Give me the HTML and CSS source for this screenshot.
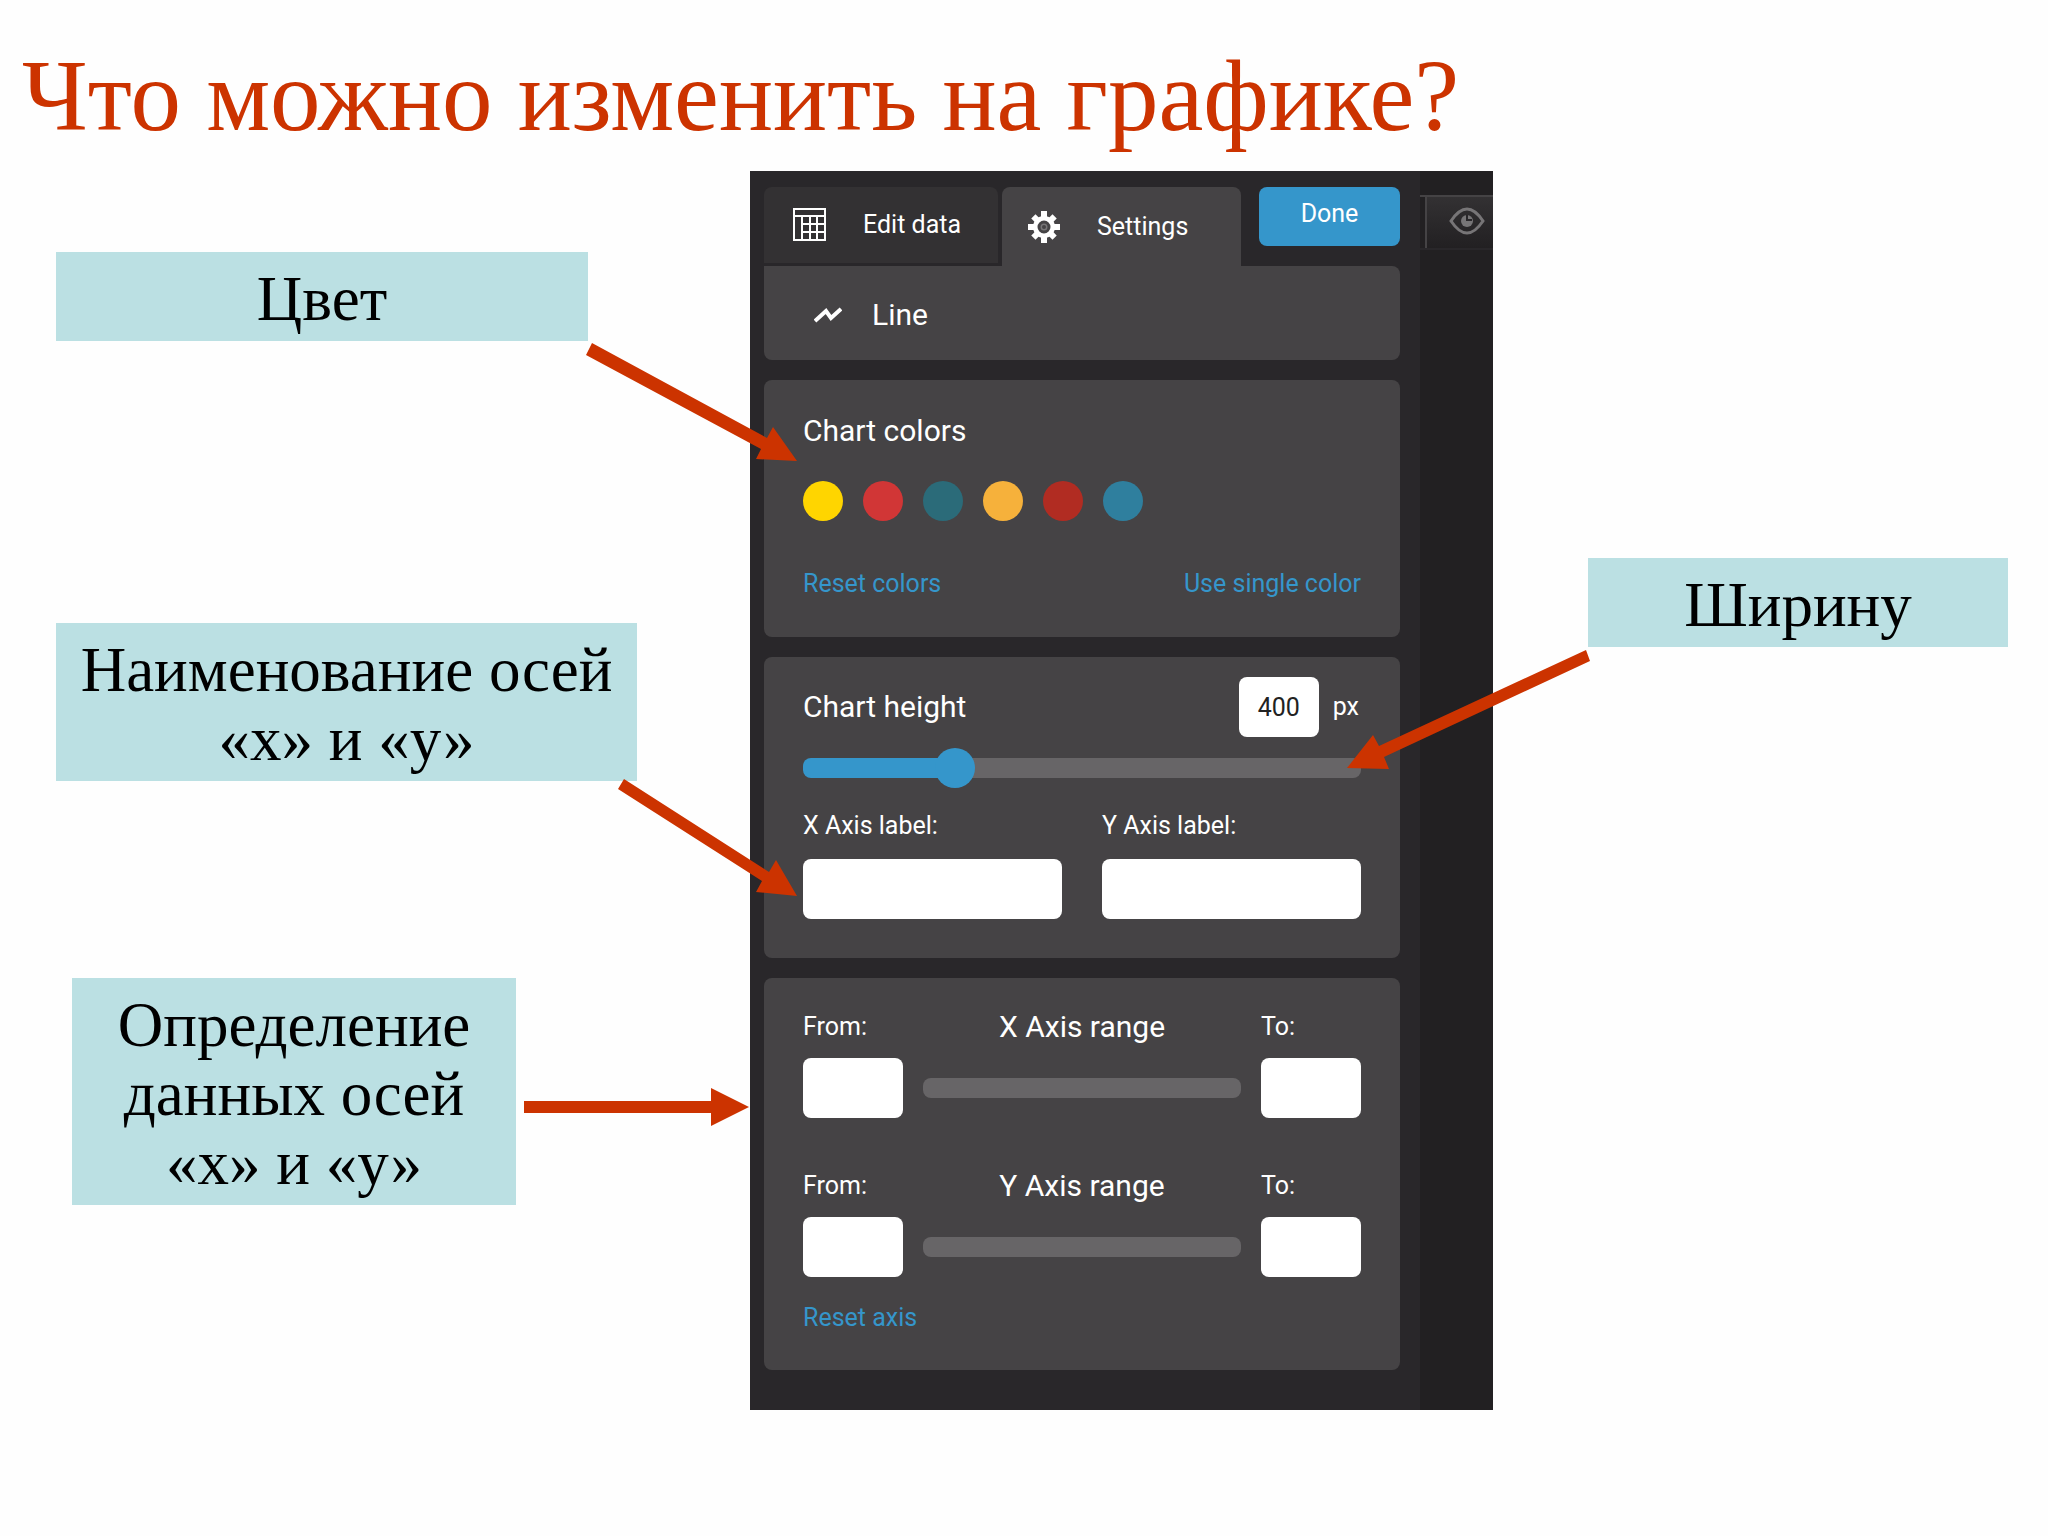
FILE: index.html
```html
<!DOCTYPE html>
<html lang="ru">

<head>
    <meta charset="UTF-8">
    <title>Что можно изменить на графике?</title>
    <link rel="stylesheet" href="styles.css">
</head>

<body>
    <h1 class="title">Что можно изменить на графике?</h1>
    <main class="slide">
        <div class="notes notes-left">
            <div class="note note-color">
                Цвет
                <svg class="arrow arrow-color" width="216" height="124" viewBox="0 0 216 124">
                    <path d="M9 0L184 95L190 84L214 118L173 116L178 106L3 12Z" />
                </svg>
            </div>
            <div class="note note-axis">
                Наименование осей «х» и «у»
                <svg class="arrow arrow-axis" width="184" height="122" viewBox="0 0 184 122">
                    <path d="M9 0L154 93L161 81L182 117L141 113L147 102L3 10Z" />
                </svg>
            </div>
            <div class="note note-range">
                Определение данных осей «х» и «у»
                <svg class="arrow arrow-range" width="225" height="38" viewBox="0 0 225 38">
                    <path d="M0 13H187V0L225 19L187 38V25H0Z" />
                </svg>
            </div>
        </div>

        <div class="editor">
            <form class="sidebar">
                <div class="tabs">
                    <button type="button" class="tab">
                        <svg class="tab-icon" width="36" height="36" viewBox="0 0 36 36">
                            <path d="M2 2H33V33H2ZM2 9H33M10 9V33M18 9V33M25 9V33M10 17H33M10 25H33" fill="none" stroke="#fff" stroke-width="2" />
                        </svg>
                        Edit data
                    </button>
                    <button type="button" class="tab active">
                        <svg class="tab-icon" width="36" height="36" viewBox="-18 -18 36 36">
                            <g fill="#fff">
                                <rect x="-3" y="-16" width="6" height="32" />
                                <rect x="-16" y="-3" width="32" height="6" />
                                <rect x="-3" y="-15" width="6" height="30" transform="rotate(45)" />
                                <rect x="-3" y="-15" width="6" height="30" transform="rotate(-45)" />
                                <circle r="11" />
                            </g>
                            <circle r="5" fill="#777577" stroke="#454345" stroke-width="3" />
                            <circle r="2" fill="#454345" />
                        </svg>
                        Settings
                    </button>
                    <button type="button" class="done">Done</button>
                </div>

                <section class="card card-type">
                    <svg width="28" height="16" viewBox="0 0 28 16">
                        <path d="M1 14L12 4L17 11L27 2" fill="none" stroke="#fff" stroke-width="4" />
                    </svg>
                    <h2>Line</h2>
                </section>

                <section class="card card-colors">
                    <h2>Chart colors</h2>
                    <div class="swatches">
                        <button type="button" class="swatch yellow" aria-label="Color 1"></button>
                        <button type="button" class="swatch red" aria-label="Color 2"></button>
                        <button type="button" class="swatch teal" aria-label="Color 3"></button>
                        <button type="button" class="swatch orange" aria-label="Color 4"></button>
                        <button type="button" class="swatch brick" aria-label="Color 5"></button>
                        <button type="button" class="swatch blue" aria-label="Color 6"></button>
                    </div>
                    <div class="links">
                        <a href="#">Reset colors</a>
                        <a href="#">Use single color</a>
                    </div>
                </section>

                <section class="card card-height">
                    <div class="height-row">
                        <h2><label for="height">Chart height</label></h2>
                        <input type="text" id="height" class="box" value="400">
                        <span>px</span>
                    </div>
                    <input type="range" class="slider height-slider" min="0" max="1000" value="255" aria-label="Chart height">
                    <div class="label-row">
                        <div class="field">
                            <label for="x-label">X Axis label:</label>
                            <input type="text" id="x-label" class="box">
                        </div>
                        <div class="field">
                            <label for="y-label">Y Axis label:</label>
                            <input type="text" id="y-label" class="box">
                        </div>
                    </div>
                </section>

                <section class="card card-range">
                    <div class="range">
                        <label for="x-from">From:</label>
                        <h2>X Axis range</h2>
                        <label for="x-to">To:</label>
                        <input type="text" id="x-from" class="box">
                        <input type="range" class="slider" aria-label="X Axis range">
                        <input type="text" id="x-to" class="box">
                    </div>
                    <div class="range">
                        <label for="y-from">From:</label>
                        <h2>Y Axis range</h2>
                        <label for="y-to">To:</label>
                        <input type="text" id="y-from" class="box">
                        <input type="range" class="slider" aria-label="Y Axis range">
                        <input type="text" id="y-to" class="box">
                    </div>
                    <a href="#">Reset axis</a>
                </section>
            </form>
            <div class="canvas">
                <div class="toolbar">
                    <button type="button" class="preview" aria-label="Preview">
                        <svg width="36" height="28" viewBox="0 0 36 28">
                            <path d="M2 14Q10 2 18 2Q26 2 34 14Q26 26 18 26Q10 26 2 14Z" fill="none" stroke="#777577" stroke-width="3" />
                            <circle cx="18" cy="14" r="6" fill="#777577" />
                            <path d="M18 8V13H23" fill="none" stroke="#29272a" stroke-width="2" />
                        </svg>
                    </button>
                </div>
            </div>
        </div>

        <div class="notes notes-right">
            <div class="note note-width">
                Ширину
                <svg class="arrow arrow-width" width="244" height="122" viewBox="0 0 244 122">
                    <path d="M240 2L33 98L27 87L1 120L43 121L38 109L244 13Z" />
                </svg>
            </div>
        </div>
    </main>
</body>

</html>
```
FILE: styles.css
```css
* {
    box-sizing: border-box;
}

body {
    margin: 0;
    background: #fefefe;
    font-family: "Liberation Serif", serif;
    color: #000;
}

h1,
h2 {
    margin: 0;
    font-weight: normal;
}

.title {
    padding: 36px 22px 15px;
    font-size: 101px;
    line-height: 120px;
    color: #cc3300;
}

.slide {
    display: grid;
    grid-template-columns: 750fr 743fr 555fr;
    align-items: start;
}

/* callouts */
.notes-left {
    padding: 81px 0 0 56px;
}

.notes-right {
    padding: 387px 40px 0 95px;
}

.note {
    position: relative;
    padding: 13px 20px 7px;
    background: #bbe0e3;
    font-size: 63px;
    line-height: 69px;
    text-align: center;
}

.note-color {
    width: 532px;
}

.note-axis {
    width: 581px;
    margin-top: 282px;
}

.note-range {
    width: 444px;
    margin: 197px 0 0 16px;
}

.arrow {
    position: absolute;
    z-index: 1;
    fill: #cc3300;
}

.arrow-color {
    left: calc(100% - 5px);
    top: 91px;
}

.arrow-axis {
    left: calc(100% - 22px);
    top: 156px;
}

.arrow-range {
    left: calc(100% + 8px);
    top: 110px;
}

.arrow-width {
    right: calc(100% - 2px);
    top: 90px;
}

/* editor */
.editor {
    display: flex;
    background: #29272a;
    color: #fff;
    font-family: Roboto, sans-serif;
    font-size: 25px;
    line-height: 30px;
}

.sidebar {
    flex: 1;
    padding: 16px 20px 40px 14px;
}

.tabs {
    display: grid;
    grid-template-columns: 234fr 243fr 159fr;
    align-items: start;
}

.tab {
    display: flex;
    align-items: center;
    height: 76px;
    padding: 0 28px;
    border: none;
    border-radius: 8px 8px 0 0;
    background: #333133;
    color: #fff;
    font: inherit;
    white-space: nowrap;
}

.tab-icon {
    margin-right: 35px;
}

.tab.active {
    height: 79px;
    margin-left: 4px;
    padding: 0 24px;
    background: #454345;
}

.done {
    height: 59px;
    margin-left: 18px;
    padding: 0 0 6px;
    border: none;
    border-radius: 8px;
    background: #3596cb;
    color: #fff;
    font: inherit;
}

.card {
    margin-bottom: 20px;
    padding: 39px;
    border-radius: 8px;
    background: #454345;
}

.card h2 {
    font-size: 30px;
    line-height: 36px;
}

.card a {
    color: #3596cb;
    text-decoration: none;
}

.card-type {
    display: flex;
    align-items: center;
    gap: 30px;
    height: 94px;
    padding: 4px 50px 0;
    border-radius: 0 8px 8px 8px;
}

.card-colors {
    padding: 33px 39px 38px;
}

.swatches {
    display: flex;
    gap: 20px;
    margin: 32px 0 48px;
}

.swatch {
    width: 40px;
    height: 40px;
    padding: 0;
    border: none;
    border-radius: 50%;
}

.yellow {
    background: #ffd500;
}

.red {
    background: #d13636;
}

.teal {
    background: #2b6b79;
}

.orange {
    background: #f6b13b;
}

.brick {
    background: #b12c22;
}

.blue {
    background: #2f7f9e;
}

.links {
    display: flex;
    justify-content: space-between;
}

.box {
    width: 100%;
    height: 60px;
    border: none;
    border-radius: 8px;
    background: #fff;
    color: #222;
    font: inherit;
    text-align: center;
}

.card-height {
    padding-top: 20px;
}

.height-row {
    display: flex;
    align-items: center;
    gap: 14px;
    padding-right: 2px;
}

.height-row h2 {
    flex: 1;
}

.height-row .box {
    width: 80px;
}

.slider {
    appearance: none;
    display: block;
    width: 100%;
    height: 20px;
    margin: 0;
    border-radius: 8px;
    background: #676567;
}

.slider::-webkit-slider-thumb {
    appearance: none;
    width: 0;
    height: 0;
}

.height-slider {
    margin: 21px 0 33px;
    background: linear-gradient(to right, #3596cb 27%, #676567 27%);
}

.height-slider::-webkit-slider-thumb {
    width: 40px;
    height: 40px;
    border-radius: 50%;
    background: #3596cb;
}

.label-row {
    display: grid;
    grid-template-columns: 1fr 1fr;
    gap: 40px;
}

.field label {
    display: block;
    margin-bottom: 18px;
}

.card-range {
    margin-bottom: 0;
    padding: 31px 39px 37px;
}

.range {
    display: grid;
    grid-template-columns: 100px 1fr 100px;
    column-gap: 20px;
    row-gap: 13px;
    align-items: center;
    margin-bottom: 50px;
}

.range h2 {
    text-align: center;
}

.range + .range {
    margin-bottom: 26px;
}

.canvas {
    width: 73px;
    padding-top: 24px;
    background: #222022;
}

.toolbar {
    height: 55px;
    padding-left: 5px;
    border-top: 2px solid #454345;
    border-bottom: 2px solid #29272a;
}

.preview {
    display: flex;
    align-items: center;
    width: 100%;
    height: 100%;
    padding: 0 0 4px 22px;
    border: none;
    border-left: 2px solid #454345;
    background: linear-gradient(#333133, #222022);
}
```
